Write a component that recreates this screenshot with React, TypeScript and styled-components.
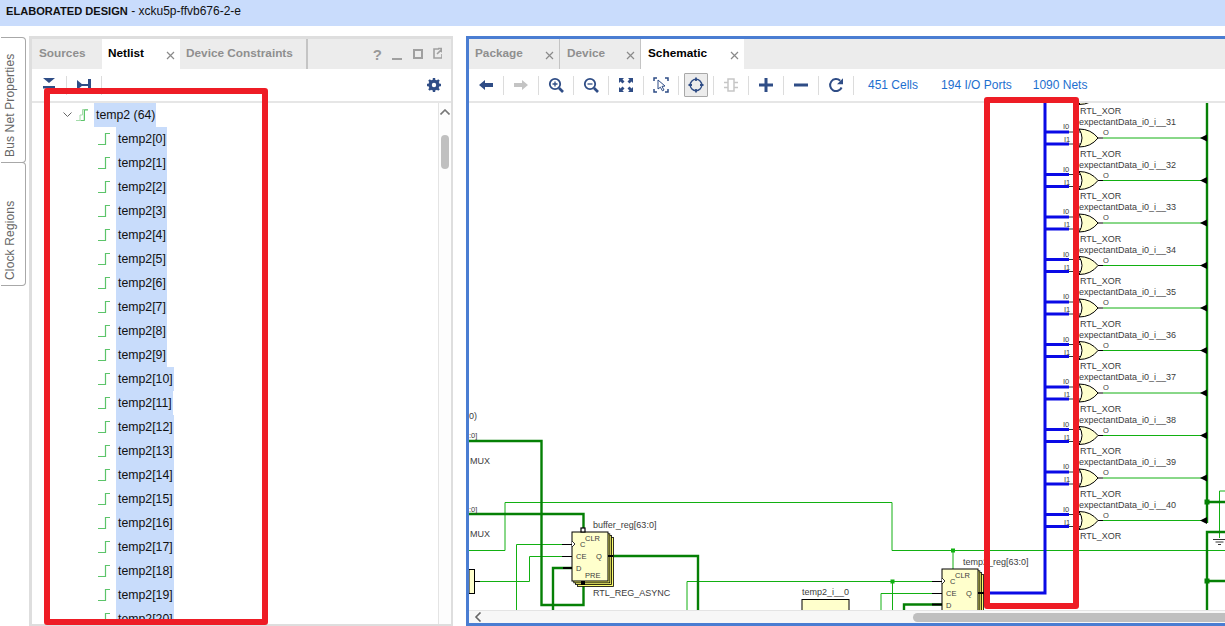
import React from "react";
import styled, { createGlobalStyle } from "styled-components";

const GlobalStyle = createGlobalStyle`
  html, body { margin: 0; padding: 0; background: #fff; }
  body { font-family: "Liberation Sans", Arial, sans-serif; }
`;

const NAVY = "#2f4d86";
const DARK = "#058005";
const THIN = "#12b012";
const BLUE = "#0a0ae6";

const rows = [30, 31, 32, 33, 34, 35, 36, 37, 38, 39, 40];
const rowY = (n: number) => 138 + (n - 31) * 42.5;
const nets = Array.from({ length: 21 }, (_, i) => `temp2[${i}]`);

const Close = () => (
  <CloseIcon viewBox="0 0 9 9">
    <path d="M1 1l7 7M8 1L1 8" />
  </CloseIcon>
);

const Icon = ({ children }: { children: React.ReactNode }) => (
  <svg width="18" height="18" viewBox="0 0 18 18">{children}</svg>
);

const ToolIcons: Record<string, React.ReactNode> = {
  back: <path d="M2 9l6-5v3h8v4H8v3z" fill={NAVY} />,
  forward: <path d="M16 9l-6-5v3H2v4h8v3z" fill="#c4c4c4" />,
  zoomIn: (
    <g fill="none" stroke={NAVY}>
      <circle cx="8" cy="8" r="5.2" strokeWidth="1.8" />
      <path d="M12 12l4 4" strokeWidth="2.6" />
      <path d="M5.5 8h5M8 5.5v5" strokeWidth="1.3" />
    </g>
  ),
  zoomOut: (
    <g fill="none" stroke={NAVY}>
      <circle cx="8" cy="8" r="5.2" strokeWidth="1.8" />
      <path d="M12 12l4 4" strokeWidth="2.6" />
      <path d="M5.5 8h5" strokeWidth="1.3" />
    </g>
  ),
  fit: (
    <g fill={NAVY}>
      <path d="M2 2h5L5.5 3.5 7.5 5.5 5.5 7.5 3.5 5.5 2 7z" />
      <path d="M16 2h-5l1.5 1.5-2 2 2 2 2-2L16 7z" />
      <path d="M2 16h5l-1.5-1.5 2-2-2-2-2 2L2 11z" />
      <path d="M16 16h-5l1.5-1.5-2-2 2-2 2 2L16 11z" />
    </g>
  ),
  area: (
    <g>
      <path d="M2 5V2h3M13 2h3v3M16 13v3h-3M5 16H2v-3" fill="none" stroke={NAVY} strokeWidth="1.5" />
      <path d="M6 4l7 6-3 .4 2 3.6-1.6.8-2-3.6L6 13z" fill="#fff" stroke={NAVY} strokeWidth="1" />
    </g>
  ),
  center: (
    <g fill="none" stroke={NAVY}>
      <circle cx="9" cy="9" r="5.8" strokeWidth="1.4" />
      <path d="M9 1.5v3.5M9 13v3.5M1.5 9H5M13 9h3.5" strokeWidth="1.8" />
    </g>
  ),
  chip: (
    <g fill="none" stroke="#c6c6c6" strokeWidth="1.5">
      <rect x="6" y="3" width="6" height="12" />
      <path d="M2 6.5h4M2 11.5h4M12 6.5h4M12 11.5h4" />
    </g>
  ),
  plus: <path d="M2 9h14M9 2v14" stroke={NAVY} strokeWidth="3" />,
  minus: <path d="M2 9h14" stroke={NAVY} strokeWidth="3" />,
  refresh: (
    <g>
      <path d="M14.6 11.5A6 6 0 1 1 13.2 4.7" fill="none" stroke={NAVY} strokeWidth="2" />
      <path d="M16 2.2v6h-6z" fill={NAVY} />
    </g>
  ),
};

const toolOrder = ["back", "forward", "zoomIn", "zoomOut", "fit", "area", "center", "chip", "plus", "minus", "refresh"];

const Flop = ({ x, y, name, type }: { x: number; y: number; name: string; type?: string }) => (
  <g>
    {[5.5, 3.5, 1.8].map((d) => (
      <rect key={d} x={x + d} y={y + d} width="36" height="49" fill="#ffff70" stroke="#000" strokeWidth="0.8" />
    ))}
    <rect x={x} y={y} width="36" height="49" fill="#ffffcc" stroke="#000" />
    <PinText x={x + 13} y={y + 9}>CLR</PinText>
    <PinText x={x + 8} y={y + 15}>C</PinText>
    <PinText x={x + 4} y={y + 27}>CE</PinText>
    <PinText x={x + 4} y={y + 39}>D</PinText>
    <PinText x={x + 24} y={y + 27}>Q</PinText>
    {type && <PinText x={x + 13} y={y + 46}>PRE</PinText>}
    <path d={`M${x} ${y + 9}l3 3-3 3`} fill="#fff" stroke="#000" strokeWidth="0.8" />
    <NetLabel x={x + 21} y={y - 4}>{name}</NetLabel>
    {type && <NetLabel x={x + 21} y={y + 64}>{type}</NetLabel>}
  </g>
);

const Schematic = () => (
  <Canvas viewBox="469 103 756 507" width="756" height="507">
    {/* thin nets */}
    <g fill="none" stroke={THIN} strokeWidth="1">
      <path d="M469 550.5H505V502.5H892V550.5H1225" />
      <path d="M953 550.5V569" />
      <path d="M516.5 610V544.5H572" />
      <path d="M480 581.5H529.5V556.5H572" />
      <path d="M687 610V581.5H942" />
      <path d="M892.5 581.5V610" />
      <path d="M881 610V593.5H942" />
      <path d="M1219.5 491H1225M1219.5 491V538" />
    </g>
    <Node x="951" y="548.5" width="4" height="4" fill={THIN} />
    <Node x="890.5" y="579.5" width="4" height="4" fill={THIN} />

    {/* bus nets */}
    <g fill="none" stroke={DARK} strokeWidth="2.4">
      <path d="M469 441H541.5V605H583.5V586" />
      <path d="M469 514H583.5V532" />
      <path d="M553 610V568H572" />
      <path d="M608 556H698V610" />
      <path d="M904 610V604.5H942" />
      <path d="M1207 103V523" />
      <path d="M1207 610V532H1225" />
      <path d="M1207 502H1225M1207 581H1225" />
    </g>
    <Node x="1204.5" y="499.5" width="5" height="5" fill={DARK} />
    <Node x="1204.5" y="578.5" width="5" height="5" fill={DARK} />
    <path d="M1213 539.5H1226M1215.5 542H1223.5M1218 544.5H1221" stroke="#000" strokeWidth="0.8" />

    {/* xor rows */}
    <path d="M1045 103V593H978" fill="none" stroke={BLUE} strokeWidth="3" />
    {rows.map((n) => {
      const c = rowY(n);
      return (
        <g key={n}>
          <path d={`M1079 ${c - 9}Q1091 ${c - 9} 1098 ${c}Q1091 ${c + 9} 1079 ${c + 9}Q1085 ${c} 1079 ${c - 9}Z`} fill="#ffffcc" stroke="#000" strokeWidth="1" />
          {n > 30 && (
            <>
              <path d={`M1045 ${c - 6}H1069M1045 ${c + 6}H1069`} stroke={BLUE} strokeWidth="3" />
              <path d={`M1069 ${c - 6}H1081M1069 ${c + 6}H1081`} stroke="#000" strokeWidth="0.8" />
              <path d={`M1098 ${c}H1103`} stroke="#000" strokeWidth="1" />
              <path d={`M1103 ${c}H1204`} stroke={THIN} strokeWidth="1" />
              <path d={`M1207 ${c - 3.5}V${c + 3.5}L1200 ${c}Z`} fill="#000" />
              <PinText x="1063" y={c - 9}>I0</PinText>
              <PinText x="1064" y={c + 4}>I1</PinText>
              <PinText x="1103" y={c - 3}>O</PinText>
              <NetLabel x="1080" y={c - 24}>RTL_XOR</NetLabel>
              <NetLabel x="1079" y={c - 13}>{`expectantData_i0_i__${n}`}</NetLabel>
            </>
          )}
        </g>
      );
    })}
    <NetLabel x="1080" y="538.5">RTL_XOR</NetLabel>

    {/* registers */}
    <Flop x={572} y={532} name="buffer_reg[63:0]" type="RTL_REG_ASYNC" />
    <Flop x={942} y={569} name="temp2_reg[63:0]" />
    <rect x="581" y="528" width="4" height="4" fill="#fff" stroke="#000" strokeWidth="1.2" />
    <rect x="581" y="581" width="4" height="4" fill="#000" />
    <path d="M563 568H572M932 604.5H942M978 593H986M608 556H613" stroke="#000" strokeWidth="2" />
    <path d="M562 544.5H572M562 556.5H572M932 581.5H942M932 593.5H942" stroke="#000" strokeWidth="1" />

    {/* cut off cells */}
    <rect x="469" y="569.5" width="5.5" height="24" fill="#ffffcc" stroke="#000" />
    <path d="M474.5 581.5H480" stroke="#000" strokeWidth="1" />
    <NetLabel x="469" y="419">0)</NetLabel>
    <PinText x="469" y="438">:0]</PinText>
    <NetLabel x="470" y="464">MUX</NetLabel>
    <PinText x="469" y="512">:0]</PinText>
    <NetLabel x="470" y="537">MUX</NetLabel>
    <rect x="802" y="599.5" width="47" height="20" fill="#ffffcc" stroke="#000" />
    <NetLabel x="802" y="595">temp2_i__0</NetLabel>
  </Canvas>
);

export default function App() {
  return (
    <Page>
      <GlobalStyle />
      <TitleBar>
        <TitleStrong>ELABORATED DESIGN</TitleStrong> - xcku5p-ffvb676-2-e
      </TitleBar>
      <Main>
        <SideTabs>
          <SideTab $height={126}>Bus Net Properties</SideTab>
          <SideTab $height={124}>Clock Regions</SideTab>
        </SideTabs>

        <LeftPanel>
          <TabStrip>
            <Tab $width={70} $pad={7}>Sources</Tab>
            <Tab $active $width={78} $pad={6}>
              Netlist
              <Close />
            </Tab>
            <Tab $width={128} $pad={6} $divider={2}>Device Constraints</Tab>
            <WindowIcons>
              <HelpMark>?</HelpMark>
              <svg width="50" height="16" viewBox="0 0 50 16" fill="none" stroke="#a0a0a0" strokeWidth="2">
                <path d="M0 13h10" />
                <rect x="22" y="4" width="8" height="8" />
                <path d="M47 3h-5v9h8V8M45 8l4.5-4.5M46 2.5h4v4" strokeWidth="1.6" />
              </svg>
            </WindowIcons>
          </TabStrip>
          <Toolbar>
            <ToolSlot>
              <svg width="14" height="14" viewBox="0 0 14 14">
                <path d="M1 0h12L7 5z" fill={NAVY} />
                <path d="M1 8h12v2.5H1z" fill={NAVY} />
              </svg>
            </ToolSlot>
            <Sep />
            <ToolSlot>
              <svg width="14" height="14" viewBox="0 0 14 14" fill={NAVY}>
                <path d="M0 2l6 5-6 5z" />
                <path d="M11 1h3v12h-3z" />
                <path d="M5 6h7v2H5z" />
              </svg>
            </ToolSlot>
            <Sep />
            <GearSlot>
              <svg width="16" height="16" viewBox="0 0 16 16">
                <circle cx="8" cy="8" r="5.6" fill={NAVY} />
                <path d="M8 1v3M8 12v3M1 8h3M12 8h3M3 3l2.2 2.2M10.8 10.8L13 13M13 3l-2.2 2.2M5.2 10.8L3 13" stroke={NAVY} strokeWidth="2.4" />
                <circle cx="8" cy="8" r="2.2" fill="#fff" />
              </svg>
            </GearSlot>
          </Toolbar>
          <TreeArea>
            <Tree>
              <TreeRow $indent={31}>
                <Chevron viewBox="0 0 9 6">
                  <path d="M.5.5l4 4 4-4" />
                </Chevron>
                <NetIcon viewBox="0 0 12 12">
                  <path d="M0 11.5h4V6h2.5V.5H12M2 11.5h6V1" fill="none" stroke="#a5dcab" strokeWidth="1" />
                  <path d="M5 11.5h3.5V1H12" fill="none" stroke="#5cc46a" strokeWidth="1" />
                </NetIcon>
                <TreeLabel>temp2 (64)</TreeLabel>
              </TreeRow>
              {nets.map((net) => (
                <TreeRow key={net} $indent={66}>
                  <NetIcon viewBox="0 0 12 12">
                    <path d="M0 11.5h7.5V.5H12" fill="none" stroke="#5cc46a" strokeWidth="1.2" />
                  </NetIcon>
                  <TreeLabel>{net}</TreeLabel>
                </TreeRow>
              ))}
            </Tree>
            <VScroll>
              <svg width="10" height="6" viewBox="0 0 10 6" fill="none" stroke="#777" strokeWidth="1.6">
                <path d="M.5 5.5L5 1l4.5 4.5" />
              </svg>
              <VThumb />
            </VScroll>
          </TreeArea>
          <RedBox $left={12} $top={49} $width={224} $height={537} />
        </LeftPanel>

        <RightPanel>
          <TabStrip>
            <Tab $width={91} $pad={6} $divider={1}>
              Package
              <Close />
            </Tab>
            <Tab $width={81} $pad={7} $divider={1}>
              Device
              <Close />
            </Tab>
            <Tab $active $width={103} $pad={7}>
              Schematic
              <Close />
            </Tab>
          </TabStrip>
          <Toolbar>
            {toolOrder.map((key) => (
              <React.Fragment key={key}>
                <ToolButton $active={key === "center"}>
                  <Icon>{ToolIcons[key]}</Icon>
                </ToolButton>
                <Sep />
              </React.Fragment>
            ))}
            <Stat $left={14}>451 Cells</Stat>
            <Stat $left={23}>194 I/O Ports</Stat>
            <Stat $left={21}>1090 Nets</Stat>
          </Toolbar>
          <Schematic />
          <HScroll>
            <svg width="8" height="10" viewBox="0 0 8 10" fill="none" stroke="#666" strokeWidth="1.6">
              <path d="M6.5.5L2 5l4.5 4.5" />
            </svg>
            <HThumb />
          </HScroll>
          <RedBox $left={515} $top={58} $width={95} $height={512} />
        </RightPanel>
      </Main>
    </Page>
  );
}

const Page = styled.div`
  width: 1225px;
  height: 626px;
  overflow: hidden;
  display: flex;
  flex-direction: column;
  background: #fff;
`;

const TitleBar = styled.div`
  height: 26px;
  background: #c9dcfc;
  color: #111;
  font-size: 12px;
  line-height: 22px;
  padding-left: 6px;
  white-space: pre;
  flex: none;
`;

const TitleStrong = styled.b`
  font-size: 11.1px;
`;

const Main = styled.div`
  flex: 1;
  display: flex;
  min-height: 0;
  padding-top: 10px;
`;

const SideTabs = styled.div`
  width: 25px;
  margin-left: 1px;
  padding-top: 1px;
  flex: none;
  display: flex;
  flex-direction: column;
`;

const SideTab = styled.div<{ $height: number }>`
  height: ${(p) => p.$height}px;
  box-sizing: border-box;
  margin-bottom: -1px;
  writing-mode: vertical-rl;
  transform: rotate(180deg);
  border: 1px solid #a8a8a8;
  border-right: none;
  border-radius: 4px 0 0 4px;
  color: #666;
  font-size: 12px;
  line-height: 19px;
  padding-top: 5px;
  letter-spacing: 0.15px;
`;

const LeftPanel = styled.div`
  position: relative;
  width: 424px;
  margin-left: 3px;
  box-sizing: border-box;
  border: 3px solid #dedede;
  border-bottom-width: 2px;
  border-right-width: 2px;
  display: flex;
  flex-direction: column;
  flex: none;
`;

const RightPanel = styled.div`
  position: relative;
  flex: 1;
  margin-left: 13px;
  box-sizing: border-box;
  border: 3px solid #4a7dd2;
  border-right: none;
  display: flex;
  flex-direction: column;
  min-width: 0;
`;

const TabStrip = styled.div`
  height: 30px;
  flex: none;
  background: #ececec;
  display: flex;
  align-items: stretch;
`;

const Tab = styled.div<{ $active?: boolean; $width: number; $pad: number; $divider?: number }>`
  position: relative;
  width: ${(p) => p.$width}px;
  box-sizing: border-box;
  padding: 7px 0 0 ${(p) => p.$pad}px;
  font-size: 11.8px;
  font-weight: bold;
  color: ${(p) => (p.$active ? "#000" : "#8f8f8f")};
  background: ${(p) => (p.$active ? "#fff" : "transparent")};
  border-right: ${(p) => (p.$divider ? `${p.$divider}px solid #c4c4c4` : "none")};
  white-space: nowrap;
`;

const CloseIcon = styled.svg`
  position: absolute;
  right: 5px;
  top: 12px;
  width: 9px;
  height: 9px;
  fill: none;
  stroke: #8a8a8a;
  stroke-width: 1.2;
`;

const WindowIcons = styled.div`
  margin-left: auto;
  display: flex;
  align-items: center;
  gap: 10px;
  padding-right: 9px;
`;

const HelpMark = styled.span`
  font-size: 15px;
  font-weight: bold;
  color: #999;
`;

const Toolbar = styled.div`
  height: 32px;
  flex: none;
  background: #fff;
  border-bottom: 2px solid #e6e6e6;
  display: flex;
  align-items: center;
`;

const ToolSlot = styled.div`
  width: 34px;
  display: flex;
  justify-content: center;
`;

const GearSlot = styled.div`
  margin-left: auto;
  padding-right: 9px;
  display: flex;
`;

const Sep = styled.div`
  width: 1px;
  height: 19px;
  background: #dcdcdc;
  flex: none;
`;

const ToolButton = styled.div<{ $active?: boolean }>`
  width: 24px;
  height: 24px;
  margin: 0 5px;
  flex: none;
  display: flex;
  align-items: center;
  justify-content: center;
  box-sizing: border-box;
  background: ${(p) => (p.$active ? "#ececec" : "transparent")};
  border: 1px solid ${(p) => (p.$active ? "#a8a8a8" : "transparent")};
  border-radius: 1px;
`;

const Stat = styled.span<{ $left: number }>`
  margin-left: ${(p) => p.$left}px;
  color: #1d6fcf;
  font-size: 12px;
  white-space: nowrap;
`;

const TreeArea = styled.div`
  flex: 1;
  min-height: 0;
  display: flex;
`;

const Tree = styled.div`
  flex: 1;
  overflow: hidden;
`;

const TreeRow = styled.div<{ $indent: number }>`
  height: 24px;
  display: flex;
  align-items: center;
  padding-left: ${(p) => p.$indent}px;
`;

const Chevron = styled.svg`
  width: 9px;
  height: 6px;
  margin-right: 4px;
  fill: none;
  stroke: #666;
  stroke-width: 1;
`;

const NetIcon = styled.svg`
  width: 12px;
  height: 12px;
  margin-right: 6px;
  flex: none;
`;

const TreeLabel = styled.span`
  height: 24px;
  line-height: 24px;
  padding: 0 1px 0 2px;
  background: #c8dcfb;
  color: #111;
  font-size: 12.3px;
  white-space: nowrap;
`;

const VScroll = styled.div`
  width: 13px;
  flex: none;
  border-left: 1px solid #e4e4e4;
  background: #fdfdfd;
  display: flex;
  flex-direction: column;
  align-items: center;
  padding-top: 6px;
  box-sizing: border-box;
`;

const VThumb = styled.div`
  width: 8px;
  height: 34px;
  margin-top: 20px;
  border-radius: 4px;
  background: #c0c0c0;
`;

const Canvas = styled.svg`
  display: block;
  flex: none;
  background: #fff;
`;

const Node = styled.rect``;

const NetLabel = styled.text`
  font-family: "Liberation Sans", Arial, sans-serif;
  font-size: 9px;
  fill: #3c3c3c;
`;

const PinText = styled.text`
  font-family: "Liberation Sans", Arial, sans-serif;
  font-size: 7.5px;
  fill: #3c3c3c;
`;

const HScroll = styled.div`
  flex: 1;
  min-height: 0;
  background: #f7f7f7;
  border-top: 1px solid #e4e4e4;
  display: flex;
  align-items: center;
  padding-left: 5px;
`;

const HThumb = styled.div`
  width: 312px;
  height: 9px;
  margin-left: auto;
  border-radius: 5px 0 0 5px;
  background: #bfbfbf;
`;

const RedBox = styled.div<{ $left: number; $top: number; $width: number; $height: number }>`
  position: absolute;
  left: ${(p) => p.$left}px;
  top: ${(p) => p.$top}px;
  width: ${(p) => p.$width}px;
  height: ${(p) => p.$height}px;
  box-sizing: border-box;
  border: 6px solid #ee1c25;
  border-radius: 3px;
  pointer-events: none;
`;
